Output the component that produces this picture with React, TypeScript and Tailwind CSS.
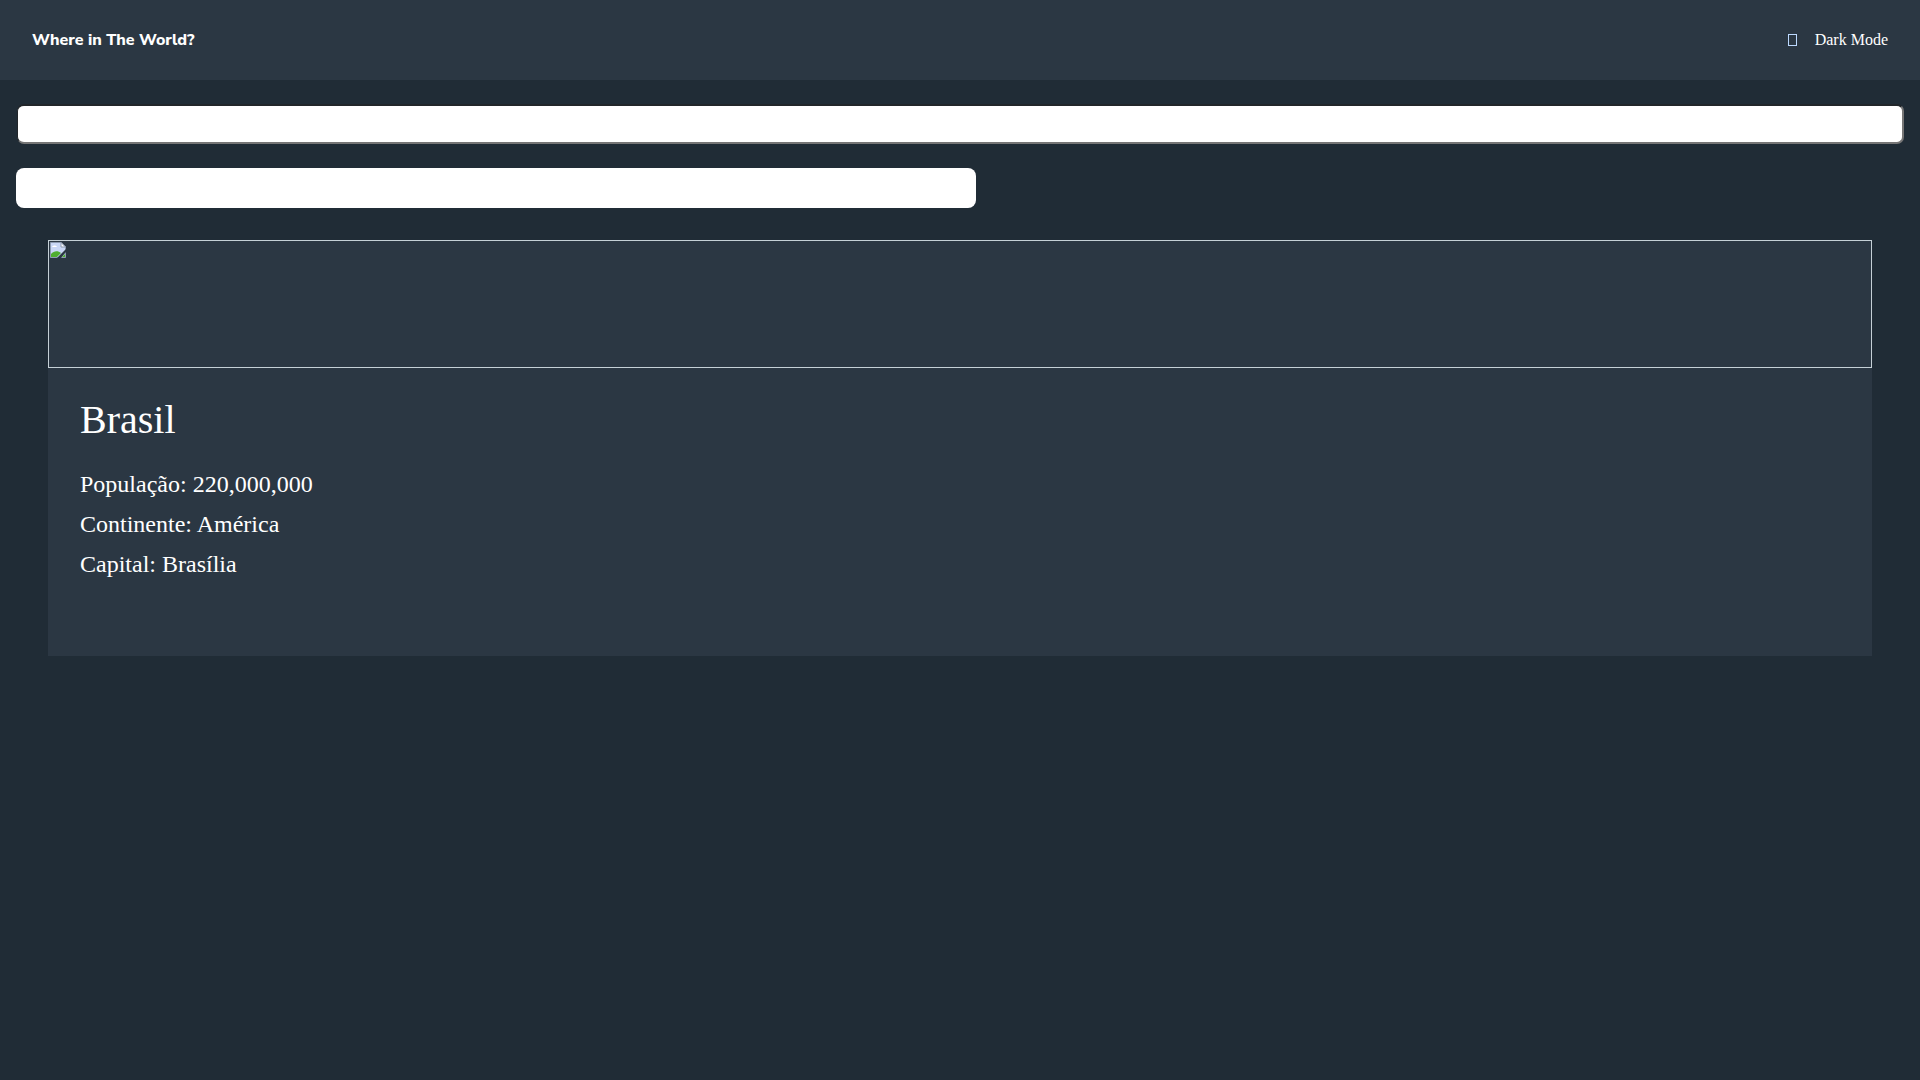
function BrokenImageIcon() {
  return (
    <svg width="16" height="16" viewBox="0 0 16 16" className="block">
      <path d="M0.5 0.5H11L15.5 5V15.5H0.5Z" fill="#c9d7f5" stroke="#8d9bb0" />
      <path d="M11 0.5V5H15.5Z" fill="#ffffff" stroke="#8d9bb0" />
      <path d="M2 5C3 3 6 3 7 5Z" fill="#ffffff" />
      <path d="M1 15V12C4 8.5 8 8.5 11 11L7 15Z" fill="#4fae2e" />
      <path d="M7 16L16 7V10L11 16Z" fill="#2b3743" />
      <path d="M12 15L15 12V15Z" fill="#4fae2e" />
    </svg>
  );
}

export default function App() {
  return (
    <div className="min-h-screen bg-[#202c36] text-white font-['Liberation_Serif',serif]">
      <header className="h-[80px] bg-[#2b3743] flex items-center justify-between px-[32px]">
        <h1 className="text-[16px] font-extrabold font-['Nunito_Sans','Open_Sans',sans-serif]">Where in The World?</h1>
        <div className="flex items-center text-[16px]">
          <span className="w-[9px] h-[12px] border border-[#bcd9ff] mr-[18px]" />
          <span>Dark Mode</span>
        </div>
      </header>
      <div className="pl-[17px] pr-[16px] pt-[24px]">
        <div className="h-[40px] bg-white rounded-[7px] border-2 border-l-[1px] border-t-[#22262a] border-l-[#22262a] border-b-[#767676] border-r-[#767676] w-full" />
      </div>
      <div className="pl-[16px] pt-[24px]">
        <div className="h-[40px] w-[960px] bg-white rounded-[8px]" />
      </div>
      <main className="px-[48px] pt-[32px]">
        <article className="bg-[#2b3743] h-[416px]">
          <div className="h-[128px] border border-[#c5d0d6] p-[1px]">
            <BrokenImageIcon />
          </div>
          <div className="pl-[32px] pt-[29px]">
            <h2 className="text-[40px] leading-[46px]">Brasil</h2>
            <div className="mt-[21px] text-[24px] leading-[40px]">
              <p>População: 220,000,000</p>
              <p>Continente: América</p>
              <p>Capital: Brasília</p>
            </div>
          </div>
        </article>
      </main>
    </div>
  );
}
